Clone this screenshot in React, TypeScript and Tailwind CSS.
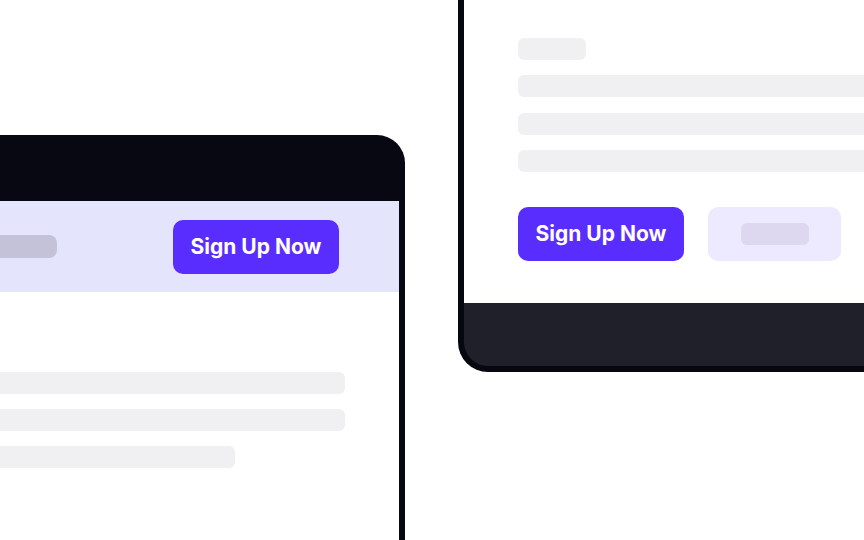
export default function App() {
  return (
    <div className="relative w-[864px] h-[540px] overflow-hidden bg-white font-['Inter','Liberation_Sans',sans-serif]">
      {/* left device, bleeds off the left and bottom edges */}
      <div className="absolute left-[-300px] top-[135px] w-[705px] h-[460px] bg-[#070812] rounded-tr-[28px] px-[6px] flex flex-col">
        <div className="h-[66px] shrink-0" />
        <div className="flex-1 bg-white flex flex-col">
          <div className="h-[91px] bg-[#e4e4fd] flex items-center justify-between pl-[194px] pr-[60px]">
            <div className="w-[157px] h-[23px] rounded-[8px] bg-[#c3c2d9]" />
            <SignUpButton />
          </div>
          <div className="pl-[194px] pt-[80px] flex flex-col gap-[15px]">
            <div className="w-[445px] h-[22px] rounded-[6px] bg-[#f0f0f2]" />
            <div className="w-[445px] h-[22px] rounded-[6px] bg-[#f0f0f2]" />
            <div className="w-[335px] h-[22px] rounded-[6px] bg-[#f0f0f2]" />
          </div>
        </div>
      </div>

      {/* right device, bleeds off the top and right edges */}
      <div className="absolute left-[458px] top-[-40px] w-[600px] h-[412px] bg-[#06070f] rounded-bl-[30px] p-[6px] flex flex-col">
        <div className="flex-1 bg-white pl-[54px] pt-[72px]">
          <div className="w-[68px] h-[22px] rounded-[6px] bg-[#f0f0f2]" />
          <div className="mt-[15px] w-[500px] h-[22px] rounded-[6px] bg-[#f0f0f2]" />
          <div className="mt-[16px] w-[500px] h-[22px] rounded-[6px] bg-[#f0f0f2]" />
          <div className="mt-[15px] w-[500px] h-[22px] rounded-[6px] bg-[#f0f0f2]" />
          <div className="mt-[35px] flex gap-[24px]">
            <SignUpButton />
            <div className="w-[133px] h-[54px] rounded-[10px] bg-[#ede9fe] flex items-center justify-center">
              <div className="w-[68px] h-[22px] rounded-[6px] bg-[#ddd8f0]" />
            </div>
          </div>
        </div>
        <div className="h-[63px] shrink-0 bg-[#20202a] rounded-bl-[24px]" />
      </div>
    </div>
  );
}

function SignUpButton() {
  return (
    <div className="w-[166px] h-[54px] rounded-[10px] bg-[#5a2dff] flex items-center justify-center text-white text-[21px] font-bold">
      Sign Up Now
    </div>
  );
}
